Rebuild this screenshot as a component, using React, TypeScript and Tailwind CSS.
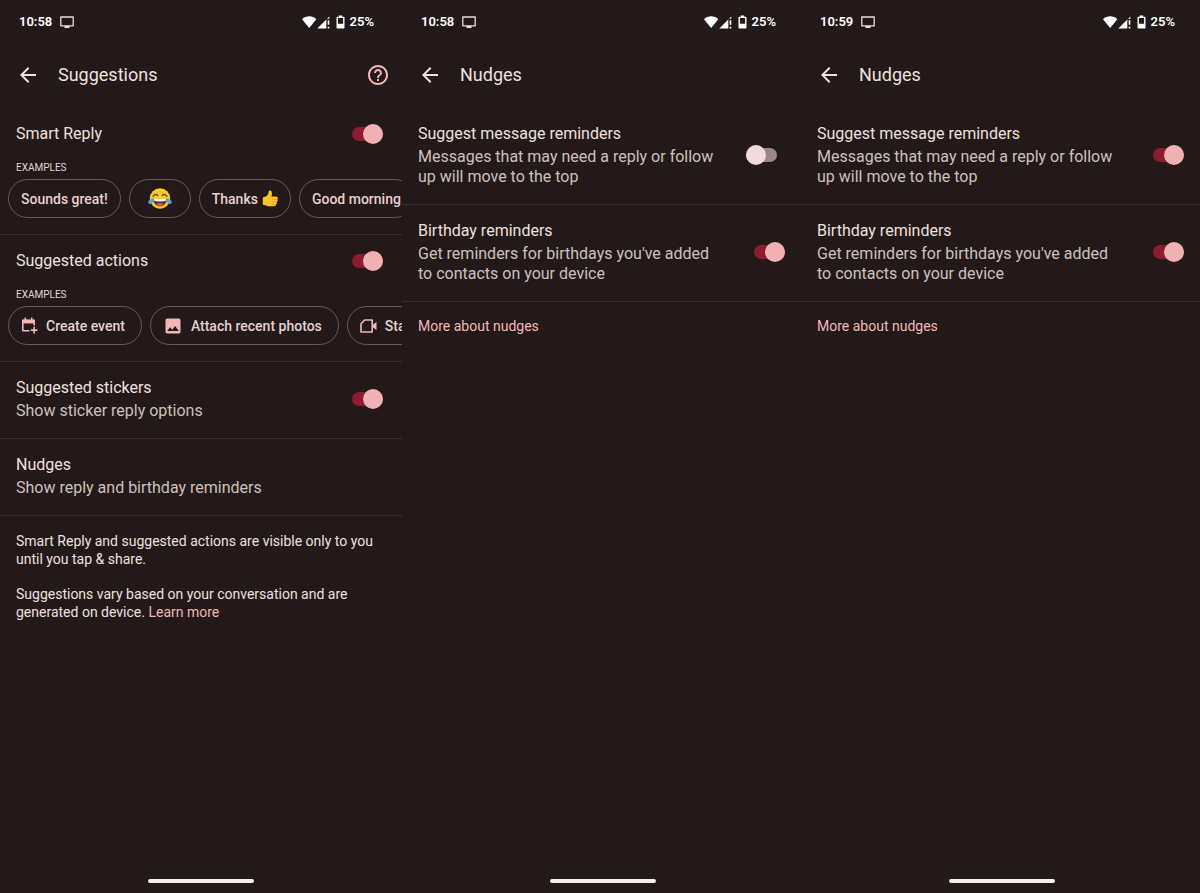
import React from "react";
import { MdArrowBack, MdHelpOutline, MdImage } from "react-icons/md";

const StatusBar = ({ time }: { time: string }) => (
  <div className="flex h-11 items-center pl-[19px] pr-7 text-[13px] font-semibold text-white">
    <span>{time}</span>
    <svg className="ml-2" width="14" height="12" viewBox="0 0 14 12" fill="none">
      <path d="M.8 1h12.400v8.800H.8z" stroke="#e8dedd" strokeWidth="1.300" strokeLinejoin="round" />
      <path d="M4.500 10h5v2h-5z" fill="#e8dedd" />
    </svg>
    <div className="ml-auto flex items-center">
      <svg width="28" height="13" viewBox="0 0 28 13" fill="white">
        <path d="M0 3.200C4 -.6 10.400 -.6 14.300 3.200L7.150 12z" />
        <path d="M15.300 12.500 24.300 3.500v9z" />
        <path d="M25 2.700 27.300.4v2.300zM25.700 4.200h1.600v4.600h-1.600zM25.700 10.700h1.600v1.800h-1.600z" />
      </svg>
      <svg className="ml-1.5" width="9" height="14" viewBox="0 0 9 14" fill="none">
        <path d="M1.200 2.400h6.600v10.400H1.200z" stroke="white" strokeWidth="1.400" strokeLinejoin="round" />
        <path d="M2.800.5h3.400v1.500H2.800zM1.500 8.700h6v4h-6z" fill="white" />
      </svg>
      <span className="ml-[5px]">25%</span>
    </div>
  </div>
);

const TopBar = ({ title, help }: { title: string; help?: boolean }) => (
  <header className="mb-0.5 flex h-[62px] items-center pl-4 pr-3">
    <button aria-label="Back">
      <MdArrowBack size={24} />
    </button>
    <h1 className="ml-[18px] text-lg">{title}</h1>
    {help && (
      <button aria-label="Help" className="ml-auto text-[#f2b8b8]">
        <MdHelpOutline size={24} />
      </button>
    )}
  </header>
);

const Screen = ({
  time,
  title,
  help,
  className = "",
  children,
}: {
  time: string;
  title: string;
  help?: boolean;
  className?: string;
  children: React.ReactNode;
}) => (
  <section
    className={`flex min-h-screen w-[33.5%] shrink-0 flex-col overflow-hidden bg-[#231918] ${className}`}
  >
    <StatusBar time={time} />
    <TopBar title={title} help={help} />
    {children}
    <div className="mx-auto mb-[10px] mt-auto h-1 w-[106px] rounded-full bg-[#f5efee]" />
  </section>
);

const Toggle = ({ id, on }: { id: string; on: boolean }) => (
  <input
    id={id}
    type="checkbox"
    role="switch"
    defaultChecked={on}
    className={`relative h-3.5 w-[31px] shrink-0 appearance-none rounded-full bg-[#9b8586] before:absolute before:-top-[3px] before:left-0 before:size-5 before:rounded-full before:bg-[#f1dadb] checked:bg-[#8c1c32] checked:before:left-[11px] checked:before:bg-[#f0b1b2] ${on ? "" : "mr-2"}`}
  />
);

const Setting = ({
  id,
  title,
  text,
  on,
}: {
  id: string;
  title: string;
  text: string;
  on?: boolean;
}) => (
  <div className="flex items-center justify-between border-b border-[#3a2f2f] pb-[17px] pl-4 pr-[19px] pt-3.5">
    <div className="w-[300px]">
      {on === undefined ? (
        <h2 className="text-base">{title}</h2>
      ) : (
        <label htmlFor={id} className="block text-base">
          {title}
        </label>
      )}
      <p className="mt-px text-base leading-5 text-[#cfc0bf]">{text}</p>
    </div>
    {on !== undefined && <Toggle id={id} on={on} />}
  </div>
);

const Examples = ({
  id,
  title,
  children,
}: {
  id: string;
  title: string;
  children: React.ReactNode;
}) => (
  <div className="border-b border-[#3a2f2f] pb-4 pt-3.5">
    <div className="flex items-center justify-between pl-4 pr-[19px]">
      <label htmlFor={id} className="text-base">
        {title}
      </label>
      <Toggle id={id} on />
    </div>
    <p className="mt-3.5 pl-4 text-[10px] leading-4 text-[#e3d5d4]">EXAMPLES</p>
    <div className="mt-[3px] flex gap-2 overflow-hidden pl-2">{children}</div>
  </div>
);

const Chip = ({ className = "", children }: { className?: string; children: React.ReactNode }) => (
  <button
    className={`flex h-[39px] shrink-0 items-center whitespace-nowrap rounded-full border border-[#6a5959] text-sm font-medium text-[#e6d0d0] ${className}`}
  >
    {children}
  </button>
);

const Joy = () => (
  <svg width="24" height="21" viewBox="0 0 24 21" role="img" aria-label="Face with tears of joy">
    <circle cx="12" cy="10.500" r="10.200" fill="#fcc92e" />
    <path d="M5 8.300q2.300-3.500 4.800-.8M14.200 7.500q2.500-2.700 4.800.8" fill="none" stroke="#5d4037" strokeWidth="1.300" strokeLinecap="round" />
    <path d="M5.200 11h13.600c0 4.500-3 7.300-6.800 7.300s-6.800-2.800-6.800-7.300z" fill="#5b3b30" />
    <path d="M6 11h12v1.700q-6 1.400-12 0z" fill="#fff" />
    <path d="M8.200 16.500q3.800-2.600 7.600 0-3.800 3.300-7.600 0z" fill="#e8554b" />
    <path d="M5.400 10.300c.3 3.600-1 5.800-3.200 5.700C-.4 15.800 0 12.700 2 11.600zM18.600 10.300c-.3 3.600 1 5.800 3.200 5.700 2.600-.2 2.200-3.300.2-4.400z" fill="#4ba9e8" />
  </svg>
);

const ThumbsUp = () => (
  <svg className="ml-1" width="16" height="17" viewBox="0 0 16 17" role="img" aria-label="Thumbs up">
    <path d="M.8 8.400c0-.8.500-1.300 1.200-1.400C5 6.400 6.400 4.700 6.700 1.700 6.800.2 8.900-.1 9.600 1.600c.6 1.500.4 3.200-.2 5h4.700c2 0 2.200 2.200 1 2.800 1 .7.800 2.200-.4 2.600.7.900.2 2.100-.8 2.300.4 1.200-.5 2-1.700 2H7.100c-1.900 0-3-1-5.200-1.300-.7-.1-1.100-.6-1.100-1.300z" fill="#fcc42b" />
    <path d="M10.300 9.400h4.600M10.200 12h4.200M10.300 14.300h3.300" stroke="#dc9018" strokeWidth=".7" strokeLinecap="round" />
  </svg>
);

const EventIcon = () => (
  <svg width="17" height="17" viewBox="0 0 17 17" fill="none" stroke="#f2b8b8">
    <path d="M8.500 13.700H1.800V3.200h11.400v5.300" strokeWidth="1.600" strokeLinejoin="round" />
    <path d="M1.300 2.800h12.400v3.600H1.300z" fill="#f2b8b8" stroke="none" />
    <path d="M4.300.5v3M10.700.5v3" strokeWidth="1.600" />
    <path d="M13.100 9.800v6.700M9.800 13.100h6.700" strokeWidth="1.600" />
  </svg>
);

const VideoIcon = () => (
  <svg width="17" height="14" viewBox="0 0 17 14" fill="none" stroke="#f2b8b8">
    <path d="M4.800 1h7.400v12H1V4.800z" strokeWidth="1.600" strokeLinejoin="round" />
    <path d="M12 6.200 16.500 3v8L12 7.800z" fill="#f2b8b8" stroke="none" />
  </svg>
);

const App = () => {
  return (
    <main className="flex min-h-screen w-full overflow-hidden bg-[#231918] font-['Roboto',sans-serif] text-[#f0e0df]">
      <Screen time="10:58" title="Suggestions" help>
        <Examples id="smart-reply" title="Smart Reply">
          <Chip className="px-3">Sounds great!</Chip>
          <Chip className="px-[18px]">
            <Joy />
          </Chip>
          <Chip className="px-3">
            Thanks
            <ThumbsUp />
          </Chip>
          <Chip className="px-3">Good morning</Chip>
        </Examples>
        <Examples id="suggested-actions" title="Suggested actions">
          <Chip className="gap-2 pl-3 pr-4">
            <EventIcon />
            Create event
          </Chip>
          <Chip className="gap-2 pl-3 pr-4">
            <MdImage size={20} className="text-[#f2b8b8]" />
            Attach recent photos
          </Chip>
          <Chip className="gap-2 pl-3 pr-4">
            <VideoIcon />
            Start
          </Chip>
        </Examples>
        <Setting id="stickers" title="Suggested stickers" text="Show sticker reply options" on />
        <Setting id="nudges" title="Nudges" text="Show reply and birthday reminders" />
        <div className="space-y-[17px] px-4 pt-4 text-sm leading-[18px]">
          <p>Smart Reply and suggested actions are visible only to you until you tap &amp; share.</p>
          <p>
            Suggestions vary based on your conversation and are generated on device.{" "}
            <a href="#" className="text-[#f2b8b8]">
              Learn more
            </a>
          </p>
        </div>
      </Screen>

      <Screen time="10:58" title="Nudges">
        <Setting
          id="message-reminders"
          title="Suggest message reminders"
          text="Messages that may need a reply or follow up will move to the top"
          on={false}
        />
        <Setting
          id="birthday-reminders"
          title="Birthday reminders"
          text="Get reminders for birthdays you've added to contacts on your device"
          on
        />
        <a href="#" className="px-4 pt-[15px] text-sm leading-[18px] text-[#f2b8b8]">
          More about nudges
        </a>
      </Screen>

      <Screen time="10:59" title="Nudges" className="-ml-[3px]">
        <Setting
          id="message-reminders-on"
          title="Suggest message reminders"
          text="Messages that may need a reply or follow up will move to the top"
          on
        />
        <Setting
          id="birthday-reminders-on"
          title="Birthday reminders"
          text="Get reminders for birthdays you've added to contacts on your device"
          on
        />
        <a href="#" className="px-4 pt-[15px] text-sm leading-[18px] text-[#f2b8b8]">
          More about nudges
        </a>
      </Screen>
    </main>
  );
};

export default App;
